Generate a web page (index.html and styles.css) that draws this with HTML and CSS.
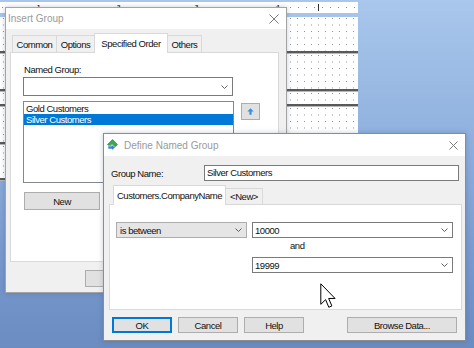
FILE: index.html
```html
<!DOCTYPE html>
<html>
<head>
<meta charset="utf-8">
<link rel="stylesheet" href="styles.css">
</head>
<body>
<div class="designer">
  <div class="ruler">
    <span class="rmark m1">1</span>
    <span class="rmark m2">2</span>
    <span class="rmark m3">3</span>
    <span class="rmark m4">4</span>
    <span class="rtick"></span>
  </div>
  <div class="surface">
    <div class="sec h1"></div><div class="sep"></div>
    <div class="sec h2"></div><div class="sep"></div>
    <div class="sec h3"></div><div class="sep"></div>
    <div class="sec h4"></div><div class="sep"></div>
    <div class="sec h5"></div><div class="sep"></div>
  </div>
</div>

<div class="dialog insert">
  <div class="titlebar">
    <span class="title">Insert Group</span>
    <svg class="close" width="10" height="10" viewBox="0 0 10 10"><path d="M0.5 0.5 L9.5 9.5 M9.5 0.5 L0.5 9.5" stroke="#7a7a7a" stroke-width="1" fill="none"/></svg>
  </div>
  <div class="dbody">
    <div class="tabs">
      <div class="tab t-common">Common</div>
      <div class="tab t-options">Options</div>
      <div class="tab active t-spec">Specified Order</div>
      <div class="tab t-others">Others</div>
    </div>
    <div class="panel ipanel">
      <div class="label">Named Group:</div>
      <div class="combo named"><span></span><svg width="7" height="4" viewBox="0 0 7 4"><path d="M0.5 0.5 L3.5 3.5 L6.5 0.5" fill="none" stroke="#606060"/></svg></div>
      <div class="listrow">
        <div class="listbox">
          <div class="item">Gold Customers</div>
          <div class="item sel">Silver Customers</div>
        </div>
        <div class="btn upbtn"><svg width="7" height="7" viewBox="0 0 7 7"><path d="M3.5 0.3 L6.7 3.5 H4.6 V6.8 H2.4 V3.5 H0.3 Z" fill="#3d8fd6"/></svg></div>
      </div>
      <div class="btn newbtn">New</div>
    </div>
    <div class="ifoot"><div class="btn hidbtn">OK</div></div>
  </div>
</div>

<div class="dialog define">
  <div class="titlebar">
    <span class="dtitle">
      <svg class="dicon" width="11" height="12" viewBox="0 0 11 12"><path d="M5.5 0.5 L10.5 5.5 L5.5 10.5 L0.5 5.5 Z" fill="#3ea84f" stroke="#2a7a38" stroke-width="0.6"/><path d="M1 7 L5 7 L5 5.5 L8 8.5 L5 11.5 L5 10 L1 10 Z" fill="#3b7fd0" stroke="#fff" stroke-width="0.6"/></svg>
      <span class="title">Define Named Group</span>
    </span>
    <svg class="close" width="9" height="9" viewBox="0 0 9 9"><path d="M0.5 0.5 L8.5 8.5 M8.5 0.5 L0.5 8.5" stroke="#7a7a7a" stroke-width="1" fill="none"/></svg>
  </div>
  <div class="dbody">
    <div class="grow">
      <span class="glabel">Group Name:</span>
      <div class="input">Silver Customers</div>
    </div>
    <div class="tabs">
      <div class="tab active t-field">Customers.CompanyName</div>
      <div class="tab t-new">&lt;New&gt;</div>
    </div>
    <div class="panel dpanel">
      <div class="crit">
        <div class="combo ro"><span>is between</span><svg width="7" height="4" viewBox="0 0 7 4"><path d="M0.5 0.5 L3.5 3.5 L6.5 0.5" fill="none" stroke="#606060"/></svg></div>
        <div class="combo"><span>10000</span><svg width="7" height="4" viewBox="0 0 7 4"><path d="M0.5 0.5 L3.5 3.5 L6.5 0.5" fill="none" stroke="#606060"/></svg></div>
        <div class="and">and</div>
        <div class="combo c2"><span>19999</span><svg width="7" height="4" viewBox="0 0 7 4"><path d="M0.5 0.5 L3.5 3.5 L6.5 0.5" fill="none" stroke="#606060"/></svg></div>
      </div>
      <svg class="cursor" width="16" height="26" viewBox="0 0 12 19.5"><path d="M0.6 0.6 V16 L4.2 12.5 L6.6 18.2 L8.9 17.2 L6.5 11.6 H11.3 Z" fill="#fff" stroke="#000" stroke-width="0.75" stroke-linejoin="miter"/></svg>
    </div>
    <div class="dbtns">
      <div class="btn focus">OK</div>
      <div class="btn">Cancel</div>
      <div class="btn">Help</div>
      <div class="btn browse">Browse Data...</div>
    </div>
  </div>
</div>
</body>
</html>
```
FILE: styles.css
```css
* { box-sizing: border-box; margin: 0; padding: 0; }
html, body { width: 474px; height: 348px; overflow: hidden; }
body {
  position: relative;
  background: linear-gradient(180deg, #a9c7ec 0%, #93b4e0 35%, #7899cd 75%, #6b8cc1 100%);
  font-family: "Liberation Sans", Arial, sans-serif;
  font-size: 9.5px;
  line-height: 11px;
  letter-spacing: -0.45px;
  color: #111;
}

/* background report designer */
.designer { width: 358px; padding-top: 2px; }
.ruler {
  position: relative;
  height: 11px;
  background-color: #8a8a8a;
  background-image:
    linear-gradient(90deg, transparent 0 1px, #fff 1px),
    linear-gradient(180deg, #fff 0 5px, transparent 5px 6px, #fff 6px);
  background-size: 8px 100%, 100% 100%;
  background-position: 2px 0, 0 0;
}
.rmark {
  position: absolute;
  top: 2px;
  font-size: 6px;
  line-height: 7px;
  font-weight: bold;
  letter-spacing: 0;
  color: #222;
  background: #fff;
  padding: 0 1px;
}
.m1 { left: 36px; }
.m2 { left: 116px; }
.m3 { left: 194px; }
.m4 { left: 275px; }
.rtick { position: absolute; left: 318px; top: 2px; width: 1px; height: 7px; background: #333; }

.surface { margin-top: 4px; }
.sec {
  background-color: #8e8e8e;
  background-image:
    linear-gradient(90deg, transparent 0 1px, #fff 1px),
    linear-gradient(180deg, transparent 0 1px, #fff 1px);
  background-size: 7px 100%, 100% 6.5px;
  background-position: 3px 0, 0 1px;
}
.h1 { height: 34px; }
.h2 { height: 35px; }
.h3 { height: 12px; }
.h4 { height: 35px; }
.h5 { height: 33px; }
.sep { height: 3px; background: linear-gradient(180deg, #595959 0 2px, #b8b8b8 2px); }

/* dialogs */
.dialog {
  position: absolute;
  background: #f0f0f0;
  border: 1px solid #a3a3a3;
  box-shadow: 0 0 5px rgba(40, 60, 100, 0.25);
  display: flex;
  flex-direction: column;
}
.insert { left: 5px; top: 7px; width: 282px; height: 286px; }
.define { left: 103px; top: 133px; width: 363px; height: 208px; border-color: #8c8c8c; }

.titlebar {
  background: #fff;
  display: flex;
  align-items: center;
  justify-content: space-between;
}
.insert .titlebar { height: 21px; padding: 0 7px 0 2px; }
.define .titlebar { height: 22px; padding: 0 7px 0 3px; }
.title { font-size: 10px; letter-spacing: 0; color: #9a9a9a; }
.dtitle { display: flex; align-items: center; }
.dicon { margin-right: 6px; }

.btn {
  background: #e1e1e1;
  border: 1px solid #adadad;
  display: flex;
  align-items: center;
  justify-content: center;
}

.tabs { display: flex; align-items: flex-end; height: 19px; }
.tab {
  height: 17px;
  border: 1px solid #d9d9d9;
  border-bottom: none;
  background: #f0f0f0;
  display: flex;
  align-items: center;
  justify-content: center;
  margin-left: -1px;
  white-space: nowrap;
}
.tab:first-child { margin-left: 0; }
.tab.active {
  height: 20px;
  margin-bottom: -1px;
  background: #fff;
  position: relative;
  z-index: 1;
  padding-bottom: 1px;
}
.panel { background: #fff; border: 1px solid #d9d9d9; }

/* insert group */
.insert .dbody { padding: 4px 7px 5px 4px; }
.insert .tabs { padding-left: 2px; }
.t-common { width: 45px; }
.t-options { width: 39px; }
.t-spec { width: 74px; }
.t-others { width: 35px; }
.ipanel { height: 210px; padding: 11px 0 0 12px; }
.label { padding-left: 1px; }
.combo {
  height: 16px;
  border: 1px solid #7a7a7a;
  background: #fff;
  display: flex;
  align-items: center;
  justify-content: space-between;
  padding: 0 4px 0 2px;
}
.named { width: 210px; height: 19px; margin-top: 2px; }
.listrow { display: flex; margin-top: 5px; }
.listbox { width: 211px; height: 82px; border: 1px solid #828790; background: #fff; padding-top: 1px; }
.item { padding-left: 2px; }
.item.sel { background: #0078d7; color: #fff; }
.upbtn { width: 19px; height: 17px; margin: 2px 0 0 7px; }
.newbtn { width: 76px; height: 18px; margin: 9px 0 0 1px; }
.ifoot { display: flex; margin-top: 8px; padding-left: 75px; }
.hidbtn { width: 75px; height: 17px; }

/* define named group */
.define .dbody { padding: 9px 3px 7px 5px; }
.grow { display: flex; align-items: center; height: 16px; }
.glabel { width: 95px; padding-left: 2px; }
.input { width: 255px; height: 16px; border: 1px solid #7a7a7a; background: #fff; padding-left: 2px; line-height: 14px; }
.define .tabs { margin-top: 4px; padding-left: 4px; }
.t-field { width: 113px; }
.t-new { width: 38px; height: 16px; }
.dpanel { position: relative; height: 106px; padding: 17px 0 0 6px; }
.crit { display: grid; grid-template-columns: 131px 201px; column-gap: 5px; }
.combo.ro { background: #e5e5e5; border-color: #adadad; padding-left: 3px; }
.and { grid-column: 2; margin: 2px 0 0 38px; }
.c2 { grid-column: 2; margin-top: 6px; }
.cursor { position: absolute; left: 210px; top: 78px; }
.dbtns { display: flex; gap: 6px; margin-top: 7px; padding-left: 3px; }
.dbtns .btn { width: 60px; height: 16px; }
.dbtns .focus { border-color: #0078d7; box-shadow: inset 0 0 0 1px #0078d7; }
.dbtns .browse { width: 110px; margin-left: 37px; }
```
